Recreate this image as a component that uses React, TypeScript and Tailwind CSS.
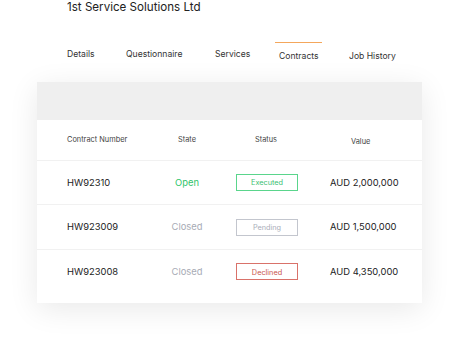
import React from "react";

const rows = [
  { num: "HW92310", state: "Open", status: "Executed", value: "AUD 2,000,000" },
  { num: "HW923009", state: "Closed", status: "Pending", value: "AUD 1,500,000" },
  { num: "HW923008", state: "Closed", status: "Declined", value: "AUD 4,350,000" },
];

function StateText({ s }: { s: string }) {
  return s === "Open" ? (
    <span className="text-[#2fc46a] text-[9.4px]">Open</span>
  ) : (
    <span className="text-[#a7abb5] text-[9.4px]">Closed</span>
  );
}

function Badge({ s }: { s: string }) {
  if (s === "Executed")
    return (
      <div className="w-[62px] h-[17px] border border-[#5ad58c] text-[#3cc072] text-[7.3px] leading-none pt-[1px] flex items-center justify-center">
        Executed
      </div>
    );
  if (s === "Pending")
    return (
      <div className="w-[62px] h-[17px] border border-[#c3c6ce] text-[#a9aeb9] text-[7.3px] leading-none pt-[1px] flex items-center justify-center">
        Pending
      </div>
    );
  return (
    <div className="w-[62px] h-[17px] border border-[#d9726a] text-[#c9554c] text-[7.3px] leading-none pt-[1px] flex items-center justify-center">
      Declined
    </div>
  );
}

export default function App() {
  return (
    <div
      className="w-[474px] h-[353px] bg-white overflow-hidden relative"
      style={{ fontFamily: "Inter, 'Noto Sans', sans-serif" }}
    >
      <div className="pl-[67px] text-[11.6px] leading-[13px] text-[#222] pt-[1px]">
        1st Service Solutions Ltd
      </div>
      <div className="flex items-start pl-[67px] mt-[28px] text-[8.6px] text-[#333]">
        <div className="w-[59px] pt-[6px]">Details</div>
        <div className="w-[89px] pt-[6px]">Questionnaire</div>
        <div className="w-[60px] pt-[6px]">Services</div>
        <div className="w-[74px]">
          <div className="w-[47px] border-t-[1.5px] border-[#f4a75c] pt-[7px] pl-[4px]">Contracts</div>
        </div>
        <div className="pt-[7.5px]">Job History</div>
      </div>
      <div className="ml-[37px] mt-[19px] w-[385px] bg-white shadow-[0_6px_28px_rgba(0,0,0,0.09)]">
        <div className="h-[38px] bg-[#efefef]" />
        <div className="grid grid-cols-[93px_54px_104px_1fr] pl-[30px] h-[41px] items-center border-b border-[#f1f1f1] text-[7.4px] text-[#444]">
          <div>Contract Number</div>
          <div className="text-center">State</div>
          <div className="text-center">Status</div>
          <div className="pl-[33px] pt-[3px]">Value</div>
        </div>
        {rows.map((r, i) => (
          <div
            key={r.num}
            className={
              i < 2
                ? "grid grid-cols-[93px_54px_104px_1fr] pl-[30px] h-[44.5px] items-center border-b border-[#f1f1f1] text-[9.4px] text-[#222]"
                : "grid grid-cols-[93px_54px_104px_1fr] pl-[30px] h-[44px] items-center text-[9.4px] text-[#222]"
            }
          >
            <div>{r.num}</div>
            <div className="text-center">
              <StateText s={r.state} />
            </div>
            <div className="flex justify-center pl-[2px]">
              <Badge s={r.status} />
            </div>
            <div className="pl-[12px]">{r.value}</div>
          </div>
        ))}
        <div className="h-[9px]" />
      </div>
    </div>
  );
}
